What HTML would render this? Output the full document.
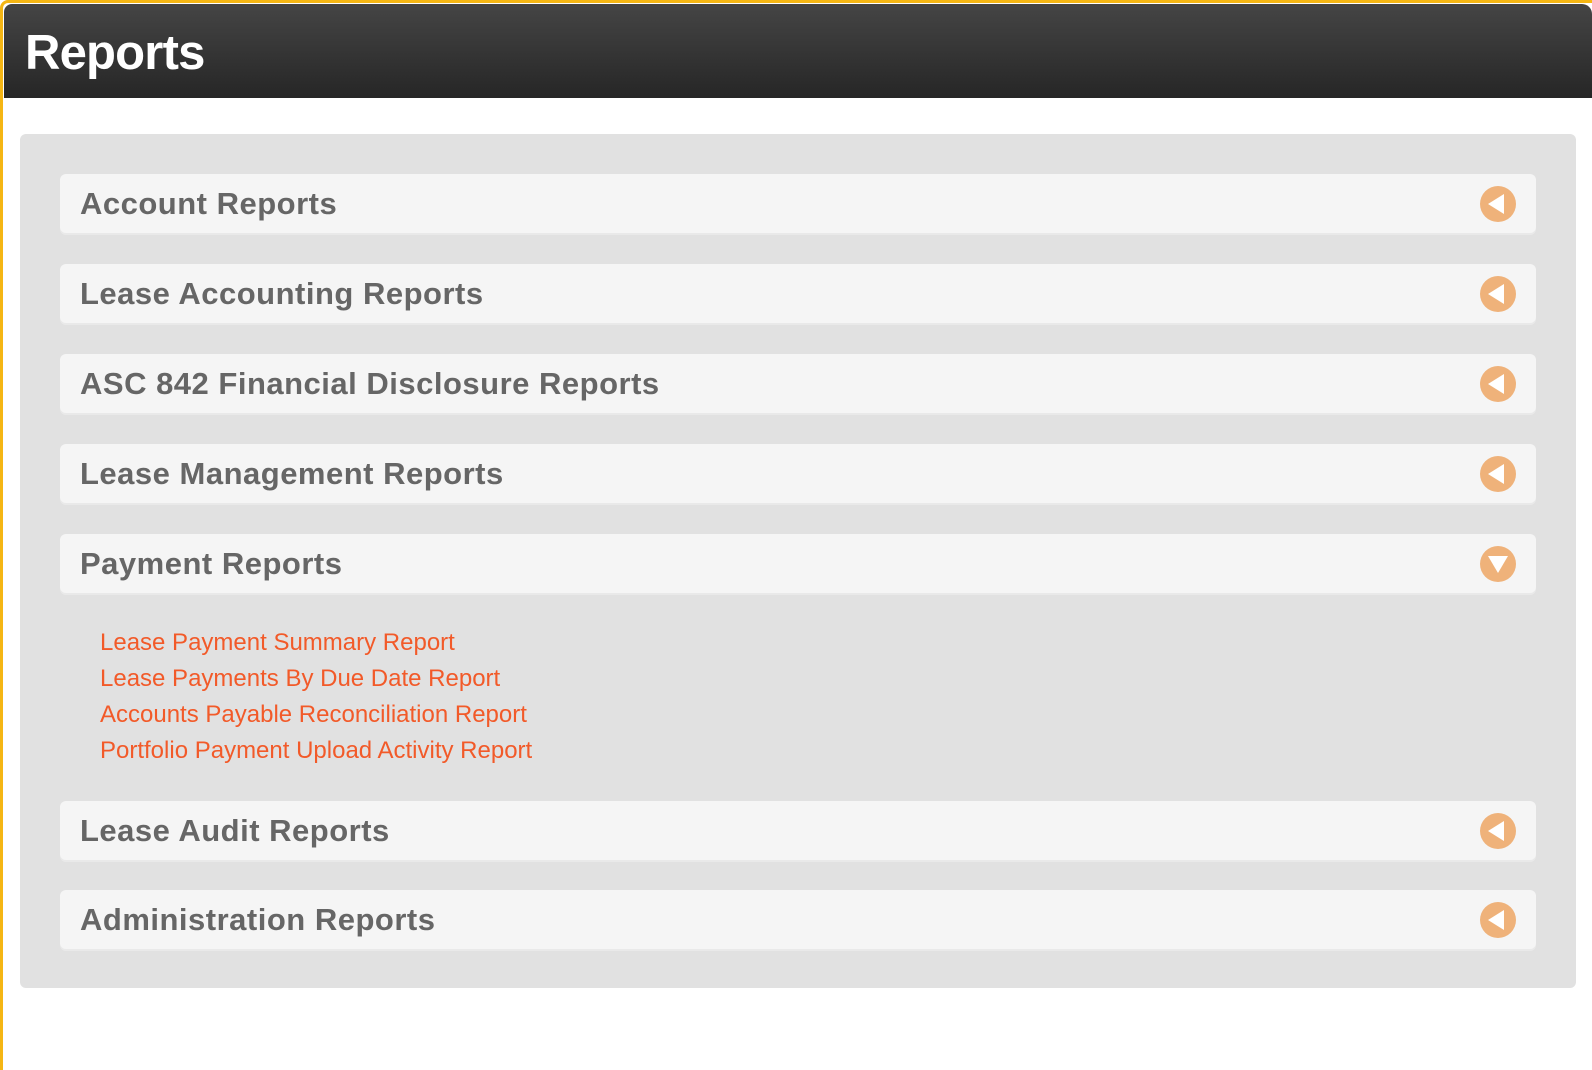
<!DOCTYPE html>
<html><head><meta charset="utf-8"><style>
html,body{margin:0;padding:0;background:#fff;width:1592px;height:1056px;overflow:hidden;font-family:"Liberation Sans",Arial,sans-serif}
.frame{position:absolute;left:0;top:0;width:1600px;height:1070px;border-top:3px solid #f5b614;border-left:3px solid #f5b614;border-top-left-radius:8px;box-sizing:border-box}
.hdr{position:absolute;left:4px;top:4px;width:1588px;height:94px;background:linear-gradient(#454545,#262626);border-top-left-radius:8px;border-top-right-radius:10px}
.hdr h1{margin:0;position:absolute;left:21px;top:23px;font-size:49px;line-height:52px;color:#fff;font-weight:bold;letter-spacing:-0.8px}
.panel{position:absolute;left:20px;top:134px;width:1556px;height:854px;background:#e1e1e1;border-radius:6px}
.row{position:absolute;left:40px;width:1476px;height:59px;background:#f5f5f5;border-radius:6px;box-shadow:0 2px 0 #e9e9e9}
.row span{position:absolute;left:20px;top:13px;font-size:31px;line-height:34px;font-weight:bold;color:#666;letter-spacing:0.5px}
.ic{position:absolute;left:1420px;top:12px;width:36px;height:36px;border-radius:50%;background:#efb27a}
.ic svg{position:absolute;left:0;top:0}
.links{position:absolute;left:80px;top:491px}
.links a{display:block;color:#f25a29;font-size:24px;line-height:36px;text-decoration:none;letter-spacing:0px}
</style></head><body>
<div class="frame"></div>
<div class="hdr"><h1>Reports</h1></div>
<div class="panel">
<div class="row" style="top:40px"><span>Account Reports</span><div class="ic"><svg width="36" height="36"><polygon points="8,18 24,8 24,28" fill="#fff"/></svg></div></div>
<div class="row" style="top:130px"><span>Lease Accounting Reports</span><div class="ic"><svg width="36" height="36"><polygon points="8,18 24,8 24,28" fill="#fff"/></svg></div></div>
<div class="row" style="top:220px"><span>ASC 842 Financial Disclosure Reports</span><div class="ic"><svg width="36" height="36"><polygon points="8,18 24,8 24,28" fill="#fff"/></svg></div></div>
<div class="row" style="top:310px"><span>Lease Management Reports</span><div class="ic"><svg width="36" height="36"><polygon points="8,18 24,8 24,28" fill="#fff"/></svg></div></div>
<div class="row" style="top:400px"><span>Payment Reports</span><div class="ic"><svg width="36" height="36"><polygon points="8,10 28,10 18,27" fill="#fff"/></svg></div></div>
<div class="links">
<a>Lease Payment Summary Report</a>
<a>Lease Payments By Due Date Report</a>
<a>Accounts Payable Reconciliation Report</a>
<a>Portfolio Payment Upload Activity Report</a>
</div>
<div class="row" style="top:667px"><span>Lease Audit Reports</span><div class="ic"><svg width="36" height="36"><polygon points="8,18 24,8 24,28" fill="#fff"/></svg></div></div>
<div class="row" style="top:756px"><span>Administration Reports</span><div class="ic"><svg width="36" height="36"><polygon points="8,18 24,8 24,28" fill="#fff"/></svg></div></div>
</div>
</body></html>
